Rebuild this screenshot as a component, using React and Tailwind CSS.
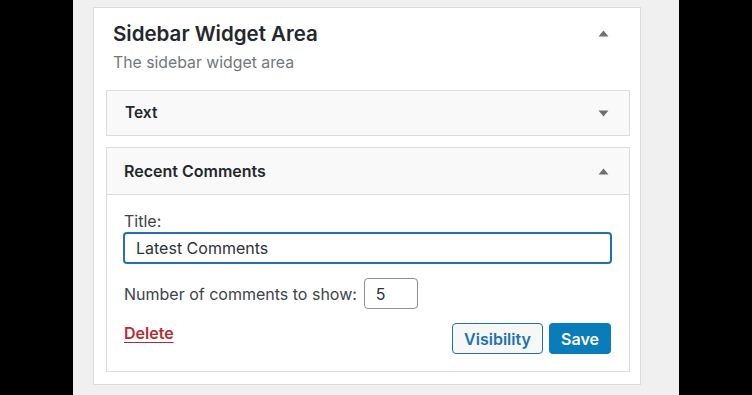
export default function App() {
  const font = { fontFamily: 'Inter, "Noto Sans", sans-serif' };
  const Up = () => (
    <svg width="11" height="7" viewBox="0 0 11 7" className="block">
      <path d="M5.5 0.5 L10.5 6.5 L0.5 6.5 Z" fill="#6c7075" />
    </svg>
  );
  const Down = () => (
    <svg width="11" height="7" viewBox="0 0 11 7" className="block">
      <path d="M0.5 0.5 L10.5 0.5 L5.5 6.5 Z" fill="#6c7075" />
    </svg>
  );
  return (
    <div className="w-[752px] h-[395px] bg-black flex justify-center overflow-hidden" style={font}>
      <div className="w-[606px] h-full bg-[#f0f0f1] pl-[20px] pt-[7px]">
        <div className="w-[548px] h-[378px] bg-white border border-[#dcdcde] pl-[12px] pr-[10px]">
          <div className="h-[82px] relative">
            <div className="pt-[13px] pl-[7px] text-[20.5px] leading-[26px] font-semibold text-[#23282d]">
              Sidebar Widget Area
            </div>
            <div className="pt-[6px] pl-[7px] text-[15.8px] leading-[20px] text-[#72777c]">
              The sidebar widget area
            </div>
            <div className="absolute left-[492px] top-[22px]"><Up /></div>
          </div>
          <div className="h-[46px] bg-[#f9f9f9] border border-[#dcdcde] flex items-center justify-between pl-[18px] pr-[20px]">
            <span className="text-[15.5px] font-semibold text-[#23282d]">Text</span>
            <Down />
          </div>
          <div className="mt-[11px] border border-[#dcdcde]">
            <div className="h-[47px] bg-[#f9f9f9] border-b border-[#dcdcde] flex items-center justify-between pl-[17px] pr-[20px]">
              <span className="text-[16px] font-semibold text-[#23282d]">Recent Comments</span>
              <Up />
            </div>
            <div className="pl-[16px] pr-[17px] pb-[17px] text-[#3c434a]">
              <div className="pt-[16px] text-[16px] leading-[20px] pl-[1px]">Title:</div>
              <div className="mt-[1px] h-[32px] border-2 border-[#2271b1] rounded-[4px] flex items-center pl-[11px] text-[16px] text-[#2c3338]">
                Latest Comments
              </div>
              <div className="mt-[14px] flex items-center pl-[1px]">
                <span className="text-[16px]">Number of comments to show:</span>
                <div className="ml-[7px] w-[54px] h-[31px] border border-[#8c8f94] rounded-[4px] flex items-center pl-[11px] text-[16px] text-[#2c3338]">
                  5
                </div>
              </div>
              <div className="mt-[14px] flex items-center justify-between pr-[1px]">
                <span className="pl-[1px] text-[16px] font-semibold text-[#b32d2e] underline underline-offset-[3px] -mt-[12px]">Delete</span>
                <div className="flex gap-[6px]">
                  <div className="w-[91px] h-[31px] rounded-[4px] border border-[#2271b1] bg-[#f6f7f7] flex items-center justify-center text-[16px] font-semibold text-[#2271b1]">
                    Visibility
                  </div>
                  <div className="w-[62px] h-[31px] rounded-[4px] bg-[#0a7cba] flex items-center justify-center text-[16px] font-semibold text-white">
                    Save
                  </div>
                </div>
              </div>
            </div>
          </div>
        </div>
      </div>
    </div>
  );
}
